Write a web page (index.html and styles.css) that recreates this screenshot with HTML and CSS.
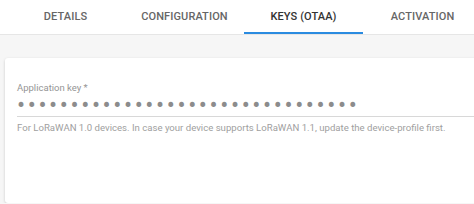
FILE: index.html
```html
<!DOCTYPE html>
<html lang="en">
<head>
  <meta charset="UTF-8" />
  <meta name="viewport" content="width=device-width, initial-scale=1.0"/>
  <title>Device keys</title>
  <link rel="stylesheet" href="styles.css">
</head>
<body>
  <nav class="tabs">
    <a class="tab">Details</a>
    <a class="tab">Configuration</a>
    <a class="tab active">Keys (OTAA)</a>
    <a class="tab">Activation</a>
  </nav>

  <main class="content">
    <section class="card">
      <div class="field">
        <label for="appKey">Application key *</label>
        <input id="appKey" type="password" value="00000000000000000000000000000000" readonly />
      </div>
      <p class="help">For LoRaWAN 1.0 devices. In case your device supports LoRaWAN 1.1, update the device-profile first.</p>
    </section>
  </main>
</body>
</html>
```

FILE: styles.css
```css
body {
  margin: 0;
  background: #f6f6f6;
  font-family: Roboto, 'Liberation Sans', sans-serif;
  overflow: hidden;
}

.tabs {
  display: flex;
  height: 34px;
  padding-left: 6px;
  background: #fff;
  border-bottom: 1px solid #e6e6e6;
}

.tab {
  flex: 0 0 119px;
  box-sizing: border-box;
  height: 34px;
  line-height: 33px;
  text-align: center;
  text-transform: uppercase;
  font-size: 11px;
  font-weight: 500;
  letter-spacing: 0.1px;
  color: #666;
  white-space: nowrap;
}

.tab.active {
  color: #333;
  border-bottom: 2px solid #2a8be0;
}

.content {
  padding: 23px 0 0 5px;
}

.card {
  width: 500px;
  height: 145px;
  box-sizing: border-box;
  padding: 24px 0 0 12px;
  background: #fff;
  border-radius: 3px;
  box-shadow: 0 1px 3px rgba(0, 0, 0, 0.18);
}

.field label {
  display: block;
  font-size: 9.5px;
  line-height: 12px;
  color: #959595;
}

.field input {
  display: block;
  width: 100%;
  box-sizing: content-box;
  height: 17px;
  margin-top: 2px;
  padding: 0 0 3px;
  border: none;
  border-bottom: 1px solid #d8d8d8;
  font-family: inherit;
  font-size: 24px;
  line-height: 17px;
  color: #8c8c8c;
  letter-spacing: 2.6px;
  outline: none;
  background: transparent;
}

.help {
  margin: 5px 0 0;
  font-size: 9.6px;
  line-height: 12px;
  color: #a0a0a0;
  white-space: nowrap;
}
```
